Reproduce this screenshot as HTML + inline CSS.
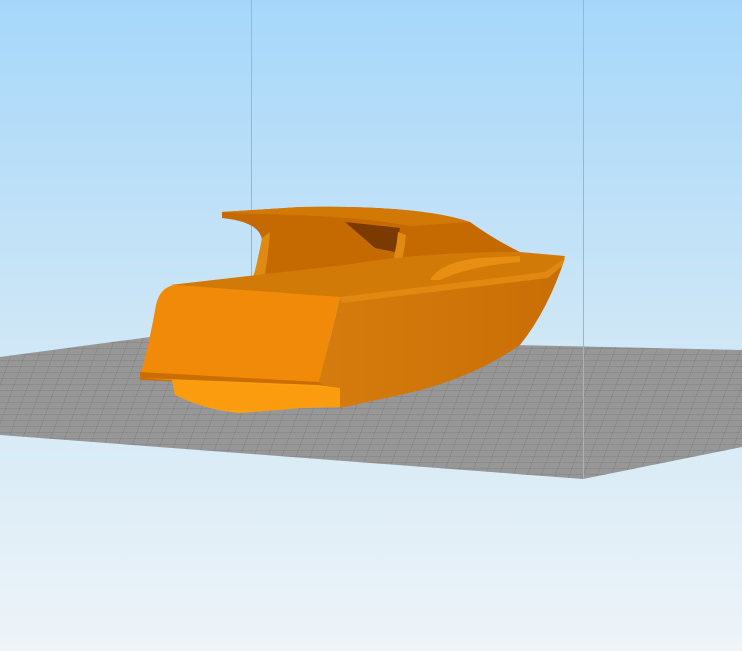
<html><head><style>body{margin:0;width:742px;height:651px;overflow:hidden}</style></head><body>
<svg width="742" height="651" viewBox="0 0 742 651" xmlns="http://www.w3.org/2000/svg">
<defs>
<linearGradient id="bg" x1="0" y1="0" x2="0" y2="1"><stop offset="0" stop-color="#a6d7fa"/><stop offset="0.5" stop-color="#cde6f6"/><stop offset="1" stop-color="#eef4f8"/></linearGradient>
<pattern id="grid" width="14" height="6" patternUnits="userSpaceOnUse" patternTransform="skewX(-20)"><rect width="14" height="6" fill="#979797"/><path d="M0 0H14M0 0V6" stroke="#777" stroke-width="0.8"/></pattern>
<linearGradient id="side" x1="0" y1="0" x2="1" y2="0"><stop offset="0" stop-color="#d67c0e"/><stop offset="1" stop-color="#c86e04"/></linearGradient>
</defs>
<rect width="742" height="651" fill="url(#bg)"/>
<polygon points="0,357 150,337 742,350 742,447 583,479 0,435" fill="url(#grid)"/>
<line x1="251.5" y1="0" x2="251.5" y2="340" stroke="#aab2b8"/>
<line x1="583.5" y1="0" x2="583.5" y2="479" stroke="#aab2b8"/>
<path d="M222 212 L300 207 Q420 205 470 222 Q495 240 520 252 L400 262 Q385 275 380 290 L250 300 Q255 270 262 240 Q260 222 222 218 Z" fill="#c46a00"/>
<path d="M222 212 L300 207 Q420 205 470 222 L410 226 Q350 215 250 214 Z" fill="#d27805"/>
<path d="M345 222 L400 228 L395 252 L375 248 Z" fill="#7a3a00"/>
<path d="M262 238 Q258 265 248 292 L262 290 Q268 260 270 232 Z" fill="#e08a10"/>
<path d="M398 232 Q395 265 382 292 L392 290 Q404 262 406 235 Z" fill="#e08a10"/>
<path d="M170 285 L345 265 Q420 252 520 252 L565 256 Q560 270 545 272 L340 298 Z" fill="#d27a08"/>
<path d="M430 280 Q440 262 480 258 L520 256 L520 262 Q470 266 440 280 Z" fill="#e88e12"/>
<path d="M340 297 L545 272 L565 258 Q548 310 520 345 Q470 380 400 395 L340 408 L318 385 Q330 340 340 297 Z" fill="url(#side)"/>
<path d="M340 297 L545 272 L565 258 L562 266 L548 278 L342 303 Z" fill="#e08810"/>
<path d="M175 285 L340 297 Q330 340 318 385 Q280 380 140 377 Q150 340 156 305 Q160 287 175 285 Z" fill="#f08a08"/>
<path d="M140 372 L318 382 L330 388 L140 380 Z" fill="#c86e04"/>
<path d="M140 378 L172 380 L175 395 Q205 410 240 413 L300 408 L340 407 L340 388 L318 385 Z" fill="#fba110"/>
<path d="M172 380 L340 388 L340 407 L300 408 Q240 415 200 405 L175 395 Z" fill="#fb9c0e"/>
</svg>
</body></html>
